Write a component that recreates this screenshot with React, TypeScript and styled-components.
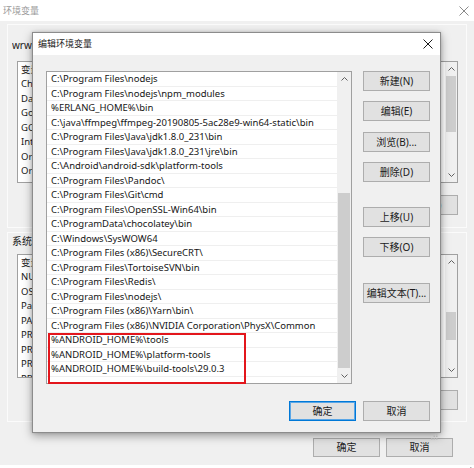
import React from "react";
import styled, { createGlobalStyle, css } from "styled-components";

const GlobalStyle = createGlobalStyle`
  html, body { margin: 0; padding: 0; background: #ffffff; }
  body { width: 474px; height: 468px; overflow: hidden; font-family: "Noto Sans", "Noto Sans CJK SC", sans-serif; }
  * { box-sizing: border-box; }
`;

const Desktop = styled.div`
  position: relative;
  width: 474px;
  height: 468px;
  overflow: hidden;
  background: #ffffff;
`;

const OuterWindow = styled.div`
  width: 474px;
  height: 465px;
  display: flex;
  flex-direction: column;
  background: #f0f0f0;
`;

const TitleBar = styled.div<{ $inactive?: boolean; $h: number; $padL: number; $padR: number }>`
  flex: none;
  height: ${(p) => p.$h}px;
  background: #ffffff;
  display: flex;
  align-items: center;
  justify-content: space-between;
  padding: 0 ${(p) => p.$padR}px 0 ${(p) => p.$padL}px;
  color: ${(p) => (p.$inactive ? "#9a9a9a" : "#1a1a1a")};
  font-family: "Noto Sans CJK SC", sans-serif;
  font-size: 9px;
  line-height: 12px;
`;

const Group = styled.section<{ $mt: number; $h: number; $pt: number }>`
  flex: none;
  margin: ${(p) => p.$mt}px 7px 0 7px;
  height: ${(p) => p.$h}px;
  border: 1px solid #fbfbfb;
  padding: ${(p) => p.$pt}px 8px 0 4px;
  display: flex;
  flex-direction: column;
`;

/* label is visible only up to the edge of the dialog that covers it */
const GroupLabel = styled.div`
  width: 20px;
  height: 14px;
  line-height: 14px;
  font-size: 10px;
  color: #1a1a1a;
  white-space: nowrap;
  overflow: hidden;
`;

const OuterList = styled.div<{ $mt: number; $h: number }>`
  margin: ${(p) => p.$mt}px 0 0 5px;
  height: ${(p) => p.$h}px;
  border: 1px solid #a0a0a0;
  background: #ffffff;
  display: flex;
  overflow: hidden;
`;

const ListBody = styled.div`
  flex: 1;
  overflow: hidden;
`;

const OuterRow = styled.div`
  height: 14.5px;
  display: flex;
  align-items: center;
  font-size: 9.5px;
  color: #1a1a1a;
`;

/* name column, clipped where the dialog starts */
const NameCell = styled.div`
  flex: none;
  width: 14px;
  margin-left: 3px;
  white-space: nowrap;
  overflow: hidden;
`;

const Scrollbar = styled.div<{ $w: number }>`
  flex: none;
  width: ${(p) => p.$w}px;
  background: #f0f0f0;
  display: flex;
  flex-direction: column;
`;

const Arrow = styled.div`
  flex: none;
  height: 14px;
  display: flex;
  align-items: center;
  justify-content: center;
`;

const Track = styled.div`
  flex: 1;
  display: flex;
  flex-direction: column;
  padding: 0 1px;
`;

const Thumb = styled.div`
  flex: none;
  background: #cdcdcd;
`;

const ButtonRow = styled.div<{ $mt: number }>`
  margin-top: ${(p) => p.$mt}px;
  display: flex;
  justify-content: flex-end;
  gap: 7px;
`;

const Button = styled.button<{ $default?: boolean }>`
  flex: none;
  width: 67px;
  height: 20px;
  margin: 0;
  padding: 0;
  background: #e1e1e1;
  border: 1px solid #adadad;
  font-family: "Noto Sans", "Noto Sans CJK SC", sans-serif;
  font-size: 10px;
  line-height: 18px;
  color: #1a1a1a;
  ${(p) =>
    p.$default &&
    css`
      border-color: #0078d7;
      box-shadow: inset 0 0 0 1px #5aa6e6;
    `}
`;

const OuterFooter = styled.div`
  flex: none;
  margin-top: 16px;
  padding-right: 21px;
  display: flex;
  justify-content: flex-end;
  gap: 6px;
`;

const FooterButton = styled(Button)`
  height: 19px;
  line-height: 17px;
`;

const GripSlot = styled.div<{ $right: number; $bottom: number }>`
  position: absolute;
  right: ${(p) => p.$right}px;
  bottom: ${(p) => p.$bottom}px;
  width: 7px;
  height: 7px;
`;

/* ---------- dialog ---------- */

const Dialog = styled.div`
  position: absolute;
  left: 32px;
  top: 32px;
  width: 409px;
  height: 401px;
  border: 1px solid #8c8c8c;
  background: #f0f0f0;
  box-shadow: 0 3px 9px rgba(0, 0, 0, 0.35), 0 0 3px rgba(0, 0, 0, 0.15);
  display: flex;
  flex-direction: column;
`;

const DialogBody = styled.div`
  flex: none;
  padding: 16px 10px 0 13px;
  display: flex;
  gap: 11px;
`;

const PathList = styled.div`
  flex: none;
  width: 306px;
  height: 313px;
  border: 1px solid #a0a0a0;
  background: #ffffff;
  display: flex;
`;

const PathRows = styled.div`
  position: relative;
  flex: 1;
`;

const PathRow = styled.div`
  height: 14.5px;
  border-bottom: 1px solid #efefef;
  padding-left: 4px;
  display: flex;
  align-items: center;
  font-size: 9.5px;
  color: #161616;
  white-space: nowrap;
`;

const Highlight = styled.div`
  position: absolute;
  left: 1px;
  top: 261px;
  width: 198px;
  height: 51px;
  border: 2px solid #e3161c;
`;

const ButtonColumn = styled.div`
  flex: none;
  display: flex;
  flex-direction: column;
`;

const ButtonGroup = styled.div<{ $mt: number; $gap: number }>`
  margin-top: ${(p) => p.$mt}px;
  display: flex;
  flex-direction: column;
  gap: ${(p) => p.$gap}px;
`;

const DialogFooter = styled.div`
  flex: none;
  margin-top: 17px;
  padding-right: 10px;
  display: flex;
  justify-content: flex-end;
  gap: 7px;
`;

/* ---------- icons ---------- */

const CloseIcon = ({ color }: { color: string }) => (
  <svg width="10" height="10" viewBox="0 0 10 10">
    <path d="M0.5 0.5L9.5 9.5M9.5 0.5L0.5 9.5" stroke={color} strokeWidth="1" fill="none" />
  </svg>
);

const Chevron = ({ up }: { up?: boolean }) => (
  <svg width="7" height="4" viewBox="0 0 7 4">
    <polyline
      points={up ? "0.5,3.5 3.5,0.5 6.5,3.5" : "0.5,0.5 3.5,3.5 6.5,0.5"}
      fill="none"
      stroke="#606060"
      strokeWidth="1"
    />
  </svg>
);

const Grip = () => (
  <svg width="7" height="7" viewBox="0 0 7 7">
    <g fill="#b4b4b4">
      <rect x="5" y="0" width="1.5" height="1.5" />
      <rect x="2.5" y="2.5" width="1.5" height="1.5" />
      <rect x="5" y="2.5" width="1.5" height="1.5" />
      <rect x="0" y="5" width="1.5" height="1.5" />
      <rect x="2.5" y="5" width="1.5" height="1.5" />
      <rect x="5" y="5" width="1.5" height="1.5" />
    </g>
  </svg>
);

type BarProps = { width: number; offset: number; thumb: number };
const ScrollBar = ({ width, offset, thumb }: BarProps) => (
  <Scrollbar $w={width}>
    <Arrow>
      <Chevron up />
    </Arrow>
    <Track style={{ paddingTop: offset }}>
      <Thumb style={{ height: thumb }} />
    </Track>
    <Arrow>
      <Chevron />
    </Arrow>
  </Scrollbar>
);

/* ---------- data ---------- */

const userVars = ["变量", "Ch", "Da", "Go", "GO", "Int", "Or", "Or", "P"];
const systemVars = ["变量", "NU", "OS", "Pa", "PA", "PR", "PR", "PR", "PR"];

const paths = [
  "C:\\Program Files\\nodejs",
  "C:\\Program Files\\nodejs\\npm_modules",
  "%ERLANG_HOME%\\bin",
  "C:\\java\\ffmpeg\\ffmpeg-20190805-5ac28e9-win64-static\\bin",
  "C:\\Program Files\\Java\\jdk1.8.0_231\\bin",
  "C:\\Program Files\\Java\\jdk1.8.0_231\\jre\\bin",
  "C:\\Android\\android-sdk\\platform-tools",
  "C:\\Program Files\\Pandoc\\",
  "C:\\Program Files\\Git\\cmd",
  "C:\\Program Files\\OpenSSL-Win64\\bin",
  "C:\\ProgramData\\chocolatey\\bin",
  "C:\\Windows\\SysWOW64",
  "C:\\Program Files (x86)\\SecureCRT\\",
  "C:\\Program Files\\TortoiseSVN\\bin",
  "C:\\Program Files\\Redis\\",
  "C:\\Program Files\\nodejs\\",
  "C:\\Program Files (x86)\\Yarn\\bin\\",
  "C:\\Program Files (x86)\\NVIDIA Corporation\\PhysX\\Common",
  "%ANDROID_HOME%\\tools",
  "%ANDROID_HOME%\\platform-tools",
  "%ANDROID_HOME%\\build-tools\\29.0.3",
];

const VarList = ({ rows, mt, h, bar }: { rows: string[]; mt: number; h: number; bar: BarProps }) => (
  <OuterList $mt={mt} $h={h}>
    <ListBody>
      {rows.map((k, i) => (
        <OuterRow key={i}>
          <NameCell>{k}</NameCell>
        </OuterRow>
      ))}
    </ListBody>
    <ScrollBar {...bar} />
  </OuterList>
);

export default function App() {
  return (
    <Desktop>
      <GlobalStyle />
      <OuterWindow>
        <TitleBar $inactive $h={21} $padL={3} $padR={5}>
          <span>环境变量</span>
          <CloseIcon color="#8a8a8a" />
        </TitleBar>

        <Group $mt={3} $h={204} $pt={13}>
          <GroupLabel>wrw</GroupLabel>
          <VarList rows={userVars} mt={9} h={122} bar={{ width: 12, offset: 0, thumb: 56 }} />
          <ButtonRow $mt={12}>
            <Button>删除(D)</Button>
          </ButtonRow>
        </Group>

        <Group $mt={4} $h={190} $pt={1}>
          <GroupLabel>系统变</GroupLabel>
          <VarList rows={systemVars} mt={6} h={124} bar={{ width: 12, offset: 43, thumb: 28 }} />
          <ButtonRow $mt={12}>
            <Button>删除(L)</Button>
          </ButtonRow>
        </Group>

        <OuterFooter>
          <FooterButton>确定</FooterButton>
          <FooterButton>取消</FooterButton>
        </OuterFooter>
      </OuterWindow>
      <GripSlot $right={2} $bottom={4}>
        <Grip />
      </GripSlot>

      <Dialog>
        <TitleBar $h={22} $padL={5} $padR={7}>
          <span>编辑环境变量</span>
          <CloseIcon color="#1a1a1a" />
        </TitleBar>
        <DialogBody>
          <PathList>
            <PathRows>
              {paths.map((p) => (
                <PathRow key={p}>{p}</PathRow>
              ))}
              <Highlight />
            </PathRows>
            <ScrollBar width={14} offset={107} thumb={175} />
          </PathList>
          <ButtonColumn>
            <ButtonGroup $mt={0} $gap={10.33}>
              <Button>新建(N)</Button>
              <Button>编辑(E)</Button>
              <Button>浏览(B)...</Button>
              <Button>删除(D)</Button>
            </ButtonGroup>
            <ButtonGroup $mt={25} $gap={10}>
              <Button>上移(U)</Button>
              <Button>下移(O)</Button>
            </ButtonGroup>
            <ButtonGroup $mt={26} $gap={10}>
              <Button>编辑文本(T)...</Button>
            </ButtonGroup>
          </ButtonColumn>
        </DialogBody>
        <DialogFooter>
          <Button $default>确定</Button>
          <Button>取消</Button>
        </DialogFooter>
        <GripSlot $right={2} $bottom={2}>
          <Grip />
        </GripSlot>
      </Dialog>
    </Desktop>
  );
}
